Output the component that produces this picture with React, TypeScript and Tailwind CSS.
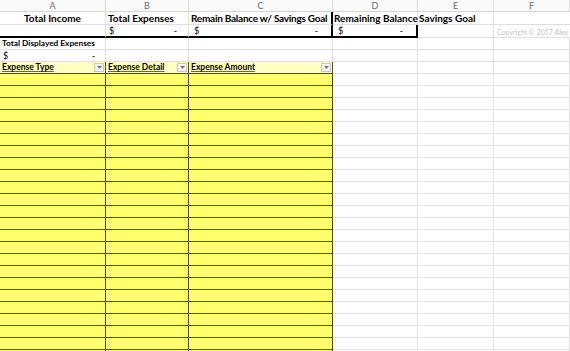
import React from "react";

const W = ["w-[106px]", "w-[83px]", "w-[144px]", "w-[85px]", "w-[76px]", "w-[76px]"];
const LETTERS = ["A", "B", "C", "D", "E", "F"];

// small filter button in table header cells
const DropBtn = () => (
  <div className="ml-auto mr-[1px] flex h-[9px] w-[10px] shrink-0 items-center justify-center border border-[#c8c8c8] bg-[#f3f3f3]">
    <svg width="5" height="3" viewBox="0 0 5 3">
      <path d="M0 0 L5 0 L2.5 3 Z" fill="#777" />
    </svg>
  </div>
);

const Money = ({ pad = "px-[3px]" }: { pad?: string }) => (
  <div className={`flex w-full justify-between ${pad} text-[9px] leading-[12px]`}>
    <span>$</span>
    <span className="pr-[8px]">-</span>
  </div>
);

export default function App() {
  const dataRows = Array.from({ length: 25 });

  return (
    <div className="h-[351px] w-[570px] overflow-hidden bg-white font-['Lato',sans-serif] leading-none text-black">
      {/* column letters */}
      <div className="flex h-[12px] border-b border-[#d4d4d4] bg-[#fafafa]">
        {LETTERS.map((l, i) => (
          <div
            key={l}
            className={`${W[i]} shrink-0 border-r border-[#dcdcdc] text-center text-[9px] leading-[11px] text-[#6b6b6b]`}
          >
            {l}
          </div>
        ))}
      </div>

      {/* Row 1: titles */}
      <div className="flex h-[13px] text-[10px] font-bold leading-[12px]">
        <div className={`${W[0]} shrink-0 border-r border-b border-[#dedede] text-center`}>Total Income</div>
        <div className={`${W[1]} shrink-0 border-r border-b border-[#dedede] pl-[2px]`}>Total Expenses</div>
        <div className={`${W[2]} shrink-0 whitespace-nowrap border-r-2 border-b border-r-black border-b-[#dedede] pl-[2px] tracking-[-0.25px]`}>
          Remain Balance w/ Savings Goal
        </div>
        <div className={`${W[3]} shrink-0 whitespace-nowrap border-r border-b border-[#dedede] pl-[1px]`}>
          Remaining Balance
        </div>
        <div className={`${W[4]} shrink-0 border-r border-b border-[#dedede] pl-[1px]`}>Savings Goal</div>
        <div className={`${W[5]} shrink-0 border-b border-[#dedede]`} />
      </div>

      {/* Row 2: amounts */}
      <div className="flex h-[13px]">
        <div className={`${W[0]} shrink-0 border-r border-r-[#dedede] border-b-2 border-b-black`} />
        <div className={`${W[1]} shrink-0 border-r border-r-[#dedede] border-b-2 border-b-black`}>
          <Money />
        </div>
        <div className={`${W[2]} shrink-0 border-r-2 border-r-black border-b-2 border-b-black`}>
          <Money pad="px-[5px]" />
        </div>
        <div className={`${W[3]} shrink-0 border-r-2 border-r-black border-b-2 border-b-black`}>
          <Money pad="px-[5px]" />
        </div>
        <div className={`${W[4]} shrink-0 border-r border-b border-[#dedede]`} />
        <div className={`${W[5]} shrink-0 overflow-hidden whitespace-nowrap border-b border-[#dedede] pl-[3px] pt-[2px] text-[7px] leading-[10px] text-[#c4c4c4]`}>
          Copyright © 2017 Alex Gorman
        </div>
      </div>

      {/* Row 3 */}
      <div className="flex h-[12px]">
        <div className={`${W[0]} shrink-0 whitespace-nowrap border-r border-b border-[#dedede] pl-[2px] text-[8.3px] font-bold leading-[11px]`}>
          Total Displayed Expenses
        </div>
        {[1, 2, 3, 4, 5].map((i) => (
          <div key={i} className={`${W[i]} shrink-0 border-r border-b border-[#dedede]`} />
        ))}
      </div>

      {/* Row 4 */}
      <div className="flex h-[12px]">
        <div className={`${W[0]} shrink-0 border-r border-b border-[#dedede]`}>
          <div className="flex justify-between pl-[3px] pr-[10px] text-[9px] leading-[11px]">
            <span>$</span>
            <span>-</span>
          </div>
        </div>
        {[1, 2, 3, 4, 5].map((i) => (
          <div key={i} className={`${W[i]} shrink-0 border-r border-b border-[#dedede]`} />
        ))}
      </div>

      {/* Table header */}
      <div className="flex h-[12px] text-[8.5px] font-bold leading-[11px]">
        <div className={`${W[0]} flex shrink-0 items-center border-r border-b border-[#4f4c2a] bg-[#ffffc4] pl-[2px]`}>
          <span className="underline decoration-[#6d6a38]">Expense Type</span>
          <DropBtn />
        </div>
        <div className={`${W[1]} flex shrink-0 items-center border-r border-b border-[#4f4c2a] bg-[#ffffc4] pl-[2px]`}>
          <span className="underline decoration-[#6d6a38]">Expense Detail</span>
          <DropBtn />
        </div>
        <div className={`${W[2]} flex shrink-0 items-center border-r border-b border-[#4f4c2a] bg-[#ffffc4] pl-[2px]`}>
          <span className="underline decoration-[#6d6a38]">Expense Amount</span>
          <DropBtn />
        </div>
        {[3, 4, 5].map((i) => (
          <div key={i} className={`${W[i]} shrink-0 border-r border-b border-[#dedede]`} />
        ))}
      </div>

      {/* Table body */}
      {dataRows.map((_, r) => (
        <div key={r} className="flex h-[12px]">
          {[0, 1, 2].map((i) => (
            <div key={i} className={`${W[i]} shrink-0 border-r border-b border-[#4f4c2a] bg-[#ffff6e]`} />
          ))}
          {[3, 4, 5].map((i) => (
            <div key={i} className={`${W[i]} shrink-0 border-r border-b border-[#e2e2e2]`} />
          ))}
        </div>
      ))}
    </div>
  );
}
